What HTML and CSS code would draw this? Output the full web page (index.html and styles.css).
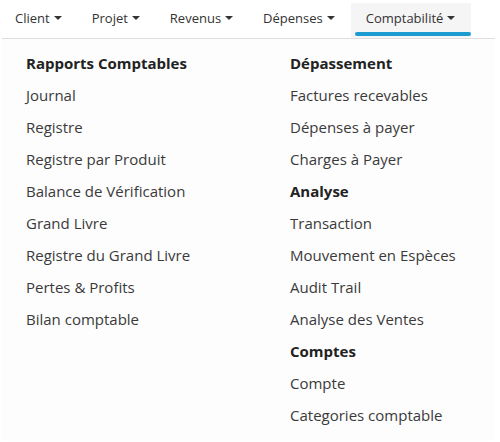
FILE: index.html
```html
<!DOCTYPE html>
<html lang="fr">
<head>
<meta charset="utf-8">
<link rel="stylesheet" href="styles.css">
</head>
<body>
<nav class="nav">
  <div class="nav-item">Client<span class="caret"></span></div>
  <div class="nav-item">Projet<span class="caret"></span></div>
  <div class="nav-item">Revenus<span class="caret"></span></div>
  <div class="nav-item">Dépenses<span class="caret"></span></div>
  <div class="nav-item active">Comptabilité<span class="caret"></span></div>
</nav>
<div class="panel">
  <div class="col">
    <div class="head">Rapports Comptables</div>
    <div class="link">Journal</div>
    <div class="link">Registre</div>
    <div class="link">Registre par Produit</div>
    <div class="link">Balance de Vérification</div>
    <div class="link">Grand Livre</div>
    <div class="link">Registre du Grand Livre</div>
    <div class="link">Pertes &amp; Profits</div>
    <div class="link">Bilan comptable</div>
  </div>
  <div class="col">
    <div class="head">Dépassement</div>
    <div class="link">Factures recevables</div>
    <div class="link">Dépenses à payer</div>
    <div class="link">Charges à Payer</div>
    <div class="head">Analyse</div>
    <div class="link">Transaction</div>
    <div class="link">Mouvement en Espèces</div>
    <div class="link">Audit Trail</div>
    <div class="link">Analyse des Ventes</div>
    <div class="head">Comptes</div>
    <div class="link">Compte</div>
    <div class="link">Categories comptable</div>
  </div>
</div>
</body>
</html>
```

FILE: styles.css
```css
html, body {
  margin: 0;
  padding: 0;
  background: #ffffff;
}
body {
  font-family: "Open Sans", "Noto Sans", "Liberation Sans", sans-serif;
  color: #333333;
  width: 500px;
  height: 442px;
  overflow: hidden;
}
.nav {
  display: flex;
  align-items: stretch;
  height: 38px;
  padding-top: 3px;
  box-sizing: border-box;
  padding-left: 1px;
}
.nav-item {
  position: relative;
  display: flex;
  align-items: center;
  padding: 0 15px 6px 14px;
  font-size: 13px;
  color: #333333;
  margin-right: 1px;
}
.caret {
  display: inline-block;
  width: 0;
  height: 0;
  margin-left: 4px;
  border-left: 4px solid transparent;
  border-right: 4px solid transparent;
  border-top: 4px solid #333333;
  vertical-align: middle;
}
.nav-item.active {
  background: #f5f5f5;
  padding-left: 15px;
  padding-right: 16px;
}
.nav-item.active::after {
  content: "";
  position: absolute;
  left: 4px;
  right: 0;
  bottom: 2px;
  height: 4px;
  border-radius: 2px;
  background: #1b9bd1;
}
.panel {
  margin: 0 5px 0 2px;
  border-top: 1px solid #dedede;
  background: #fdfdfd;
  display: grid;
  grid-template-columns: 264px 1fr;
  padding: 8px 0 0 24px;
  height: 403px;
  box-sizing: border-box;
}
.head, .link {
  height: 32px;
  line-height: 32px;
  font-size: 15px;
  white-space: nowrap;
}
.head {
  font-weight: 700;
  color: #222222;
}
.link {
  color: #3a3a3a;
}
```
